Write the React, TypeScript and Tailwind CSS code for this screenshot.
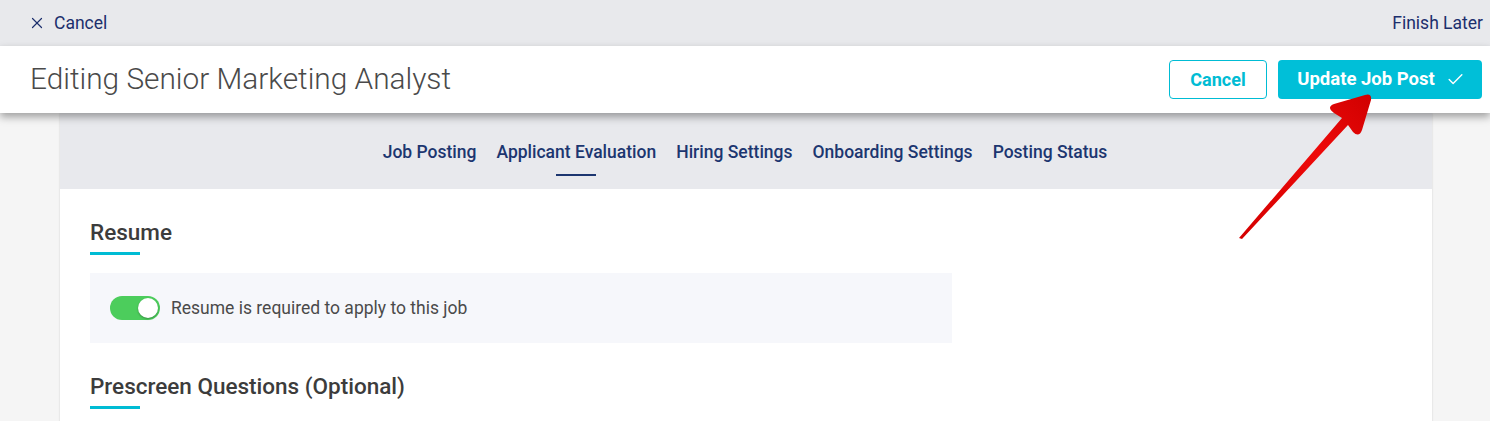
import { X, Check } from 'lucide-react'

const TABS = ['Job Posting', 'Applicant Evaluation', 'Hiring Settings', 'Onboarding Settings', 'Posting Status']

function Toggle() {
  return (
    <div className="relative w-[50px] h-[24px] rounded-full bg-[#4ccd5c] shrink-0">
      <div className="absolute right-[2px] top-[2px] w-[20px] h-[20px] rounded-full bg-white shadow-[0_1px_2px_rgba(0,0,0,0.3)]" />
    </div>
  )
}

function SectionTitle({ children }: { children: string }) {
  return (
    <div>
      <h3 className="text-[22.5px] font-medium text-[#3c3c3c] leading-[28px]">{children}</h3>
      <div className="w-[50px] h-[3px] bg-[#00bcd4] mt-[6px]" />
    </div>
  )
}

function Arrow() {
  return (
    <svg className="absolute left-0 top-0 z-20 pointer-events-none" width="1490" height="421" viewBox="0 0 1490 421">
      <defs>
        <linearGradient id="arr" x1="0" y1="1" x2="1" y2="0">
          <stop offset="0" stopColor="#d40000" />
          <stop offset="0.6" stopColor="#ee0a0a" />
          <stop offset="1" stopColor="#d00000" />
        </linearGradient>
      </defs>
      <path
        d="M1239,238 L1342,118 L1334,113 Q1326,107 1334,104 L1365,95 Q1372,93 1371,100 L1362,130 Q1359,138 1353,132 L1348,125 L1242,239 Z"
        fill="url(#arr)"
      />
    </svg>
  )
}

export default function App() {
  return (
    <div className="relative w-[1490px] h-[421px] overflow-hidden bg-[#f5f5f5] font-['Roboto',sans-serif]">
      <div className="h-[46px] bg-[#e8e9ec] flex items-center justify-between pl-[28px] pr-[7px]">
        <button className="flex items-center gap-[8px] text-[17.5px] text-[#1c2f6d]">
          <X size={18} strokeWidth={1.6} />
          Cancel
        </button>
        <span className="text-[17.5px] text-[#1c2f6d]">Finish Later</span>
      </div>

      <div className="relative z-10 h-[67px] bg-white flex items-center justify-between pl-[30px] pr-[8px] shadow-[0_4px_8px_rgba(0,0,0,0.35)]">
        <h1 className="text-[29.8px] font-light text-[#4a4a4a]">Editing Senior Marketing Analyst</h1>
        <div className="flex items-center gap-[11px]">
          <button className="w-[98px] h-[39px] rounded-[4px] border border-[#00bcd4] text-[#00bcd4] text-[18px] font-bold bg-white">
            Cancel
          </button>
          <button className="w-[204px] h-[39px] rounded-[4px] bg-[#00bfd8] text-white text-[18.5px] font-bold flex items-center justify-center gap-[11px] pl-[2px]">
            Update Job Post
            <Check size={19} strokeWidth={1.8} />
          </button>
        </div>
      </div>

      <div className="mx-[60px] w-[1372px] bg-white shadow-[0_0_2px_rgba(0,0,0,0.15)] h-[320px]">
        <div className="h-[76px] bg-[#e8e9ed] flex items-start justify-center gap-[20px] pt-[27px] pr-[2px]">
          {TABS.map((t) => (
            <div key={t} className="flex flex-col items-center">
              <span className="text-[17.5px] font-medium text-[#1c3670] leading-[24px]">{t}</span>
              {t === 'Applicant Evaluation' && <div className="w-[40px] h-[2px] bg-[#1c3670] mt-[10px]" />}
            </div>
          ))}
        </div>
        <div className="px-[30px] pt-[29px]">
          <SectionTitle>Resume</SectionTitle>
          <div className="mt-[18px] w-[862px] h-[70px] bg-[#f6f7fb] flex items-center gap-[11px] pl-[20px]">
            <Toggle />
            <span className="text-[17.5px] text-[#4a4a4a]">Resume is required to apply to this job</span>
          </div>
          <div className="mt-[29px]">
            <SectionTitle>Prescreen Questions (Optional)</SectionTitle>
          </div>
        </div>
      </div>

      <Arrow />
    </div>
  )
}
